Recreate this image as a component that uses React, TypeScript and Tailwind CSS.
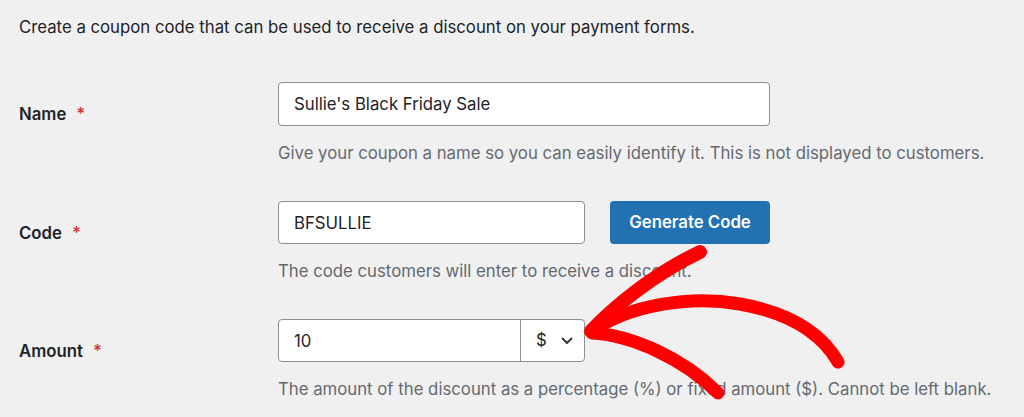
import React from 'react';

function Required() {
  return <span className="ml-[10px] text-[#d63638]">*</span>;
}

function Label({ children }: { children: React.ReactNode }) {
  return (
    <div className="pt-[20px] text-[16.75px] font-semibold leading-[24px] text-[#1d2327]">
      {children}
      <Required />
    </div>
  );
}

function Help({ children }: { children: React.ReactNode }) {
  return <p className="mt-[15px] text-[16.75px] leading-[24px] text-[#646970] whitespace-nowrap">{children}</p>;
}

export default function App() {
  return (
    <div
      className="relative h-[417px] w-[1024px] overflow-hidden bg-[#f0f0f0] pl-[19px] pt-[15px]"
      style={{ fontFamily: 'Inter, "Liberation Sans", sans-serif' }}
    >
      <p className="text-[16.75px] leading-[24px] text-[#1d2327]">
        Create a coupon code that can be used to receive a discount on your payment forms.
      </p>

      <div className="mt-[43px] grid grid-cols-[259px_1fr]">
        <Label>Name</Label>
        <div>
          <input
            readOnly
            value="Sullie's Black Friday Sale"
            className="h-[44px] w-[492px] rounded-[4px] border border-[#8c8f94] bg-white px-[15px] text-[16.75px] text-[#1d2327] outline-none"
          />
          <Help>Give your coupon a name so you can easily identify it. This is not displayed to customers.</Help>
        </div>
      </div>

      <div className="mt-[36px] grid grid-cols-[259px_1fr]">
        <Label>Code</Label>
        <div>
          <div className="flex items-center gap-[25px]">
            <input
              readOnly
              value="BFSULLIE"
              className="h-[43px] w-[307px] rounded-[4px] border border-[#8c8f94] bg-white px-[15px] text-[16.75px] text-[#1d2327] outline-none"
            />
            <button className="h-[43px] w-[160px] rounded-[4px] bg-[#2271b1] text-[16.75px] font-semibold text-white">
              Generate Code
            </button>
          </div>
          <Help>The code customers will enter to receive a discount.</Help>
        </div>
      </div>

      <div className="mt-[36px] grid grid-cols-[259px_1fr]">
        <Label>Amount</Label>
        <div>
          <div className="flex h-[43px] w-[307px] overflow-hidden rounded-[4px] border border-[#8c8f94] bg-white">
            <input
              readOnly
              value="10"
              className="h-full w-[241px] px-[15px] text-[16.75px] text-[#1d2327] outline-none"
            />
            <div className="flex flex-1 items-center gap-[14px] border-l border-[#8c8f94] pl-[15px] text-[16.75px] text-[#1d2327]">
              <span>$</span>
              <svg width="12" height="8" viewBox="0 0 12 8" fill="none" stroke="#2c3338" strokeWidth="1.8" strokeLinecap="round" strokeLinejoin="round">
                <path d="M1.5 1.5 6 6l4.5-4.5" />
              </svg>
            </div>
          </div>
          <Help>The amount of the discount as a percentage (%) or fixed amount ($). Cannot be left blank.</Help>
        </div>
      </div>

      <svg
        className="pointer-events-none absolute left-0 top-0"
        width="1024"
        height="417"
        viewBox="0 0 1024 417"
        fill="none"
        stroke="#ff0000"
        strokeLinecap="round"
        strokeLinejoin="round"
      >
        <path d="M591 331 C612 309 650 276 700 252" strokeWidth="14" />
        <path d="M592 333 C630 335 682 357 718 393" strokeWidth="13" />
        <path d="M592 331 C630 305 690 295 740 304 S822 334 838 362" strokeWidth="13" />
      </svg>
    </div>
  );
}
